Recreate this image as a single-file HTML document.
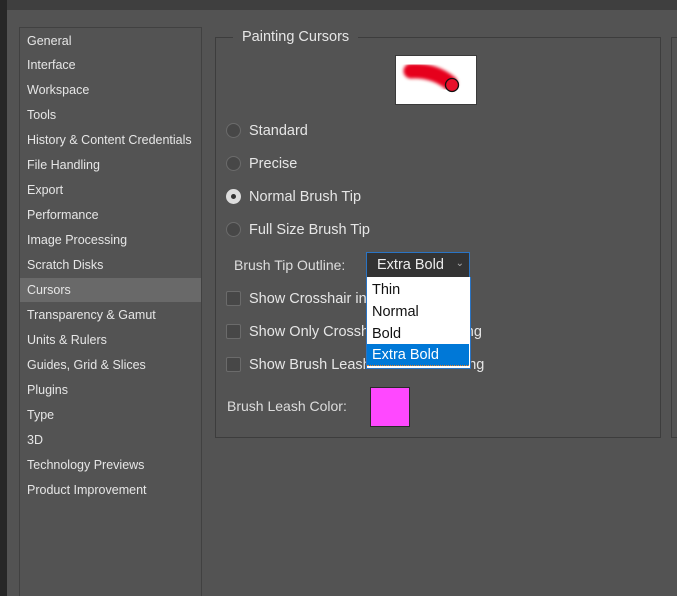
<!DOCTYPE html>
<html><head><meta charset="utf-8"><style>
*{margin:0;padding:0;box-sizing:border-box}
html,body{width:677px;height:596px;overflow:hidden}
body{background:#535353;position:relative;font-family:"Liberation Sans",sans-serif;color:#e6e6e6}
.a{position:absolute}
.side div{position:absolute;left:7px;font-size:12.5px;white-space:nowrap;height:24px;line-height:24px}
.t{font-size:14.5px;white-space:nowrap}
.r{width:15px;height:15px;border-radius:50%;background:#474747;border:1px solid #6b6b6b}
.c{width:15px;height:15px;border-radius:2px;background:#474747;border:1px solid #6b6b6b}
.dd div{position:absolute;left:0;width:102px;padding-left:5px;font-size:14.5px;color:#111;height:22px;line-height:22px}
</style></head><body>
<div class="a" style="left:0;top:0;width:677px;height:10px;background:#3f3f3f"></div>
<div class="a" style="left:0;top:0;width:7px;height:596px;background:#272727"></div>
<div class="a side" style="left:19px;top:27px;width:183px;height:569px;border:1px solid #414141;border-bottom:none;background:#535353">
<div style="top:1px">General</div>
<div style="top:25px">Interface</div>
<div style="top:50px">Workspace</div>
<div style="top:75px">Tools</div>
<div style="top:100px">History &amp; Content Credentials</div>
<div style="top:125px">File Handling</div>
<div style="top:150px">Export</div>
<div style="top:175px">Performance</div>
<div style="top:200px">Image Processing</div>
<div style="top:225px">Scratch Disks</div>
<div style="top:250px;left:0;width:181px;padding-left:7px;background:#696969">Cursors</div>
<div style="top:275px">Transparency &amp; Gamut</div>
<div style="top:300px">Units &amp; Rulers</div>
<div style="top:325px">Guides, Grid &amp; Slices</div>
<div style="top:350px">Plugins</div>
<div style="top:375px">Type</div>
<div style="top:400px">3D</div>
<div style="top:425px">Technology Previews</div>
<div style="top:450px">Product Improvement</div>
</div>
<div class="a" style="left:215px;top:37px;width:446px;height:401px;border:1px solid #3d3d3d"></div>
<div class="a" style="left:671px;top:37px;width:10px;height:401px;border:1px solid #3d3d3d"></div>
<div class="a t" style="left:233px;top:27px;background:#535353;padding:0 9px;line-height:20px">Painting Cursors</div>
<div class="a" style="left:395px;top:55px;width:82px;height:50px;background:#fff;border:1px solid #3a3a3a;overflow:hidden">
<svg width="80" height="48"><defs><filter id="b" x="-50%" y="-50%" width="200%" height="200%"><feGaussianBlur stdDeviation="1.5"/></filter></defs>
<path d="M15 15 Q38 14 54 27" stroke="#e6001e" stroke-width="15" fill="none" stroke-linecap="round" filter="url(#b)"/>
<circle cx="56" cy="29" r="6.5" fill="#e8102a" stroke="#111" stroke-width="1.3"/></svg></div>
<div class="a r" style="left:226px;top:123px"></div><div class="a t" style="left:249px;top:123px">Standard</div>
<div class="a r" style="left:226px;top:156px"></div><div class="a t" style="left:249px;top:156px">Precise</div>
<div class="a r" style="left:226px;top:189px;background:#ddd;border-color:#ddd"><div class="a" style="left:4px;top:4px;width:5px;height:5px;border-radius:50%;background:#333"></div></div><div class="a t" style="left:249px;top:189px">Normal Brush Tip</div>
<div class="a r" style="left:226px;top:222px"></div><div class="a t" style="left:249px;top:222px">Full Size Brush Tip</div>
<div class="a t" style="left:234px;top:257px;font-size:14px;color:#ddd">Brush Tip Outline:</div>
<div class="c a" style="left:226px;top:291px"></div><div class="a t" style="left:249px;top:291px">Show Crosshair in Brush Tip</div>
<div class="c a" style="left:226px;top:324px"></div><div class="a t" style="left:249px;top:324px">Show Only Crosshair While Painting</div>
<div class="c a" style="left:226px;top:357px"></div><div class="a t" style="left:249px;top:357px">Show Brush Leash While Smoothing</div>
<div class="a t" style="left:227px;top:398px;font-size:14px;color:#ddd">Brush Leash Color:</div>
<div class="a" style="left:370px;top:387px;width:40px;height:40px;background:#ff48ff;border:1px solid #2a2a2a"></div>
<div class="a" style="left:366px;top:252px;width:104px;height:26px;background:#333;border:1px solid #2a74c4;color:#eee;font-size:14.5px;line-height:24px;padding-left:10px">Extra Bold<span style="position:absolute;right:5px;top:-1px;font-size:10px;color:#aaa">&#8964;</span></div>
<div class="a dd" style="left:366px;top:277px;width:105px;height:92px;background:#fff;border:1px solid #2a74c4;border-top:none">
<div style="top:2px">Thin</div>
<div style="top:24px">Normal</div>
<div style="top:46px">Bold</div>
<div style="top:67px;background:#0078d7;color:#fff;border-bottom:1px dotted #f08020">Extra Bold</div>
</div>
</body></html>
